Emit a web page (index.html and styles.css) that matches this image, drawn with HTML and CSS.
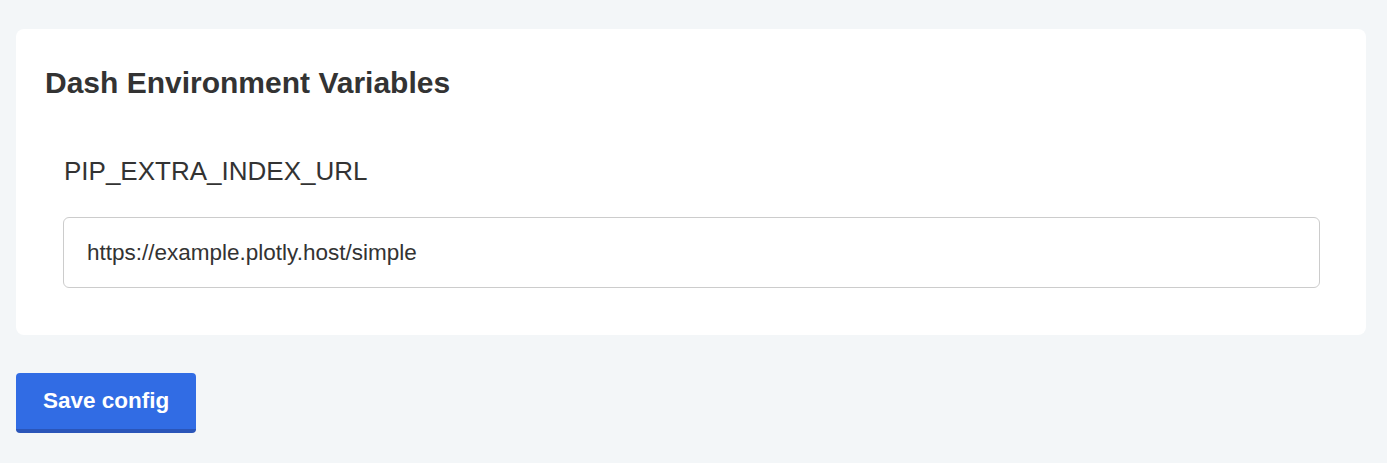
FILE: index.html
```html
<!DOCTYPE html>
<html>
  <head>
    <title>Dash Environment Variables</title>
    <link rel="stylesheet" href="styles.css">
    <meta name="viewport" content="width=device-width, initial-scale=1.0" />
  </head>
  <body>
    <div class="page">
      <div class="card">
        <h2 class="card-title">Dash Environment Variables</h2>
        <div class="field">
          <label class="field-label" for="pip_extra">PIP_EXTRA_INDEX_URL</label>
          <input class="field-input" id="pip_extra" type="text" value="https://example.plotly.host/simple" />
        </div>
      </div>
      <button class="save-btn">Save config</button>
    </div>
  </body>
</html>
```

FILE: styles.css
```css
body {
  margin: 0;
  background: #f3f6f8;
  font-family: "Liberation Sans", Arial, sans-serif;
  color: #333333;
}
.page {
  padding: 29px 21px 20px 16px;
}
.card {
  background: #ffffff;
  border-radius: 8px;
  padding: 37px 46px 47px 29px;
}
.card-title {
  margin: 0;
  font-size: 30px;
  font-weight: bold;
  line-height: 34px;
  color: #333333;
}
.field {
  padding: 56px 0 0 18px;
}
.field-label {
  display: block;
  padding-left: 1px;
  font-size: 26px;
  line-height: 30px;
  margin-bottom: 31px;
}
.field-input {
  display: block;
  box-sizing: border-box;
  width: 100%;
  height: 71px;
  padding: 0 23px;
  border: 1px solid #cccccc;
  border-radius: 6px;
  font-family: "Liberation Sans", Arial, sans-serif;
  font-size: 22.5px;
  color: #333333;
  background: #ffffff;
}
.save-btn {
  margin-top: 38px;
  height: 60px;
  padding: 0 27px;
  border: none;
  border-bottom: 4px solid #2a55b9;
  border-radius: 4px;
  background: #316ce4;
  color: #ffffff;
  font-family: "Liberation Sans", Arial, sans-serif;
  font-size: 22.5px;
  font-weight: bold;
}
```
